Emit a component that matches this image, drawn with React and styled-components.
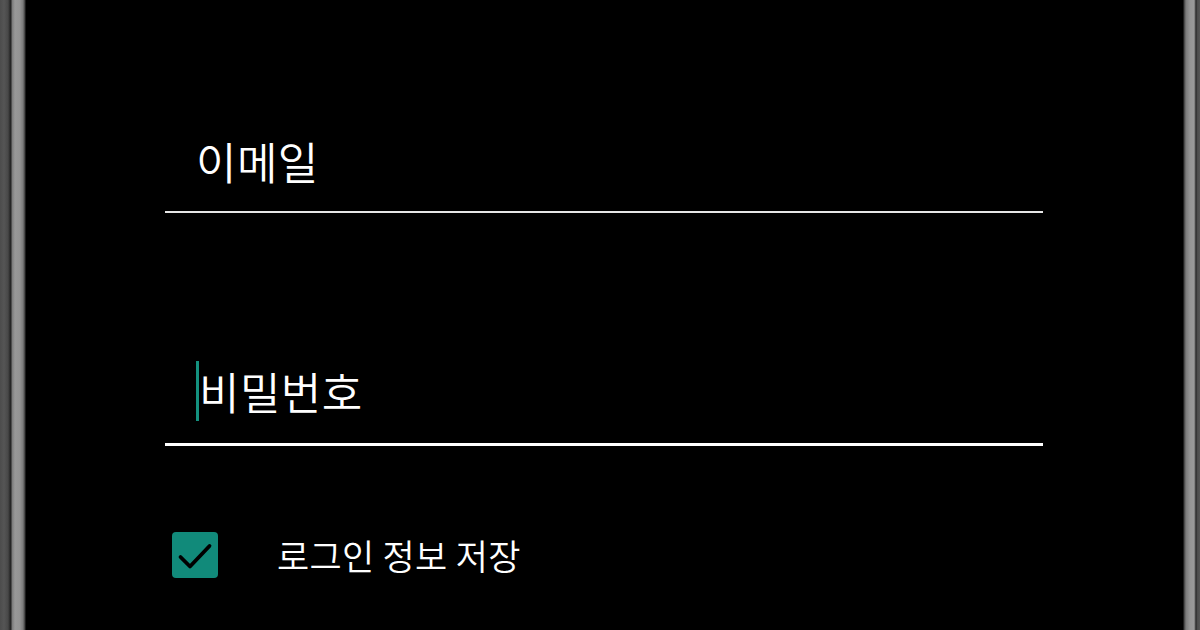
import React from 'react'
import styled, { createGlobalStyle } from 'styled-components'

const GlobalStyle = createGlobalStyle`
  html, body {
    margin: 0;
    padding: 0;
    background: #000;
  }
  body {
    font-family: "Noto Sans CJK KR", "Noto Sans", sans-serif;
  }
`

// phone frame: bezel | screen | bezel
const Frame = styled.div`
  display: flex;
  width: 1200px;
  height: 630px;
  overflow: hidden;
  background: #000;
`

const LeftBezel = styled.div`
  width: 26px;
  flex-shrink: 0;
  background: linear-gradient(
    to right,
    #4c4c4c 0px,
    #555 4px,
    #484848 8px,
    #2a2a2a 10px,
    #222 11px,
    #7a7a7a 12px,
    #999 15px,
    #949494 20px,
    #7c7c7c 23px,
    #3a3a3a 25px,
    #000 26px
  );
`

const RightBezel = styled.div`
  width: 17px;
  flex-shrink: 0;
  background: linear-gradient(
    to right,
    #000 0px,
    #3c3c3c 1px,
    #7c7c7c 3px,
    #959595 7px,
    #9a9a9a 11px,
    #6a6a6a 12px,
    #222 13px,
    #4a4a4a 14px,
    #555 17px
  );
`

const Screen = styled.div`
  flex: 1;
  display: flex;
  flex-direction: column;
  padding: 131px 0 0 139px;
`

const Form = styled.div`
  width: 878px;
  display: flex;
  flex-direction: column;
`

const Field = styled.div`
  display: flex;
  align-items: center;
  height: 60px;
  padding: 0 0 ${p => p.$gap}px 31px;
  border-bottom: ${p => p.$line}px solid ${p => p.$color};
  margin-bottom: ${p => p.$after}px;
`

const FieldText = styled.span`
  font-size: 44px;
  font-weight: 350;
  line-height: 60px;
  color: #fff;
  letter-spacing: 0.4px;
`

const Cursor = styled.span`
  display: inline-block;
  width: 3px;
  height: 60px;
  background: #14917f;
`

const CheckRow = styled.label`
  display: flex;
  align-items: center;
  padding-left: 7px;
  margin-top: 86px;
`

const Box = styled.span`
  width: 46px;
  height: 46px;
  border-radius: 4px;
  background: #118a7a;
  display: flex;
  flex-shrink: 0;
`

const CheckLabel = styled.span`
  margin-left: 59px;
  font-size: 35px;
  font-weight: 350;
  line-height: 46px;
  color: #fff;
  letter-spacing: 0.3px;
`

const App = () => {
  return (
    <>
      <GlobalStyle />
      <Frame>
        <LeftBezel />
        <Screen>
          <Form>
            <Field $gap={20} $line={2} $color="#e6e6e6" $after={148}>
              <FieldText>이메일</FieldText>
            </Field>
            <Field $gap={22} $line={3} $color="#fff" $after={0}>
              <Cursor />
              <FieldText>비밀번호</FieldText>
            </Field>
            <CheckRow>
              <Box>
                <svg width="46" height="46" viewBox="0 0 46 46">
                  <path d="M8.5 25l9.5 9.5L37.5 14" fill="none" stroke="#000" strokeWidth="3.8" strokeLinecap="round" strokeLinejoin="round" />
                </svg>
              </Box>
              <CheckLabel>로그인 정보 저장</CheckLabel>
            </CheckRow>
          </Form>
        </Screen>
        <RightBezel />
      </Frame>
    </>
  )
}

export default App
